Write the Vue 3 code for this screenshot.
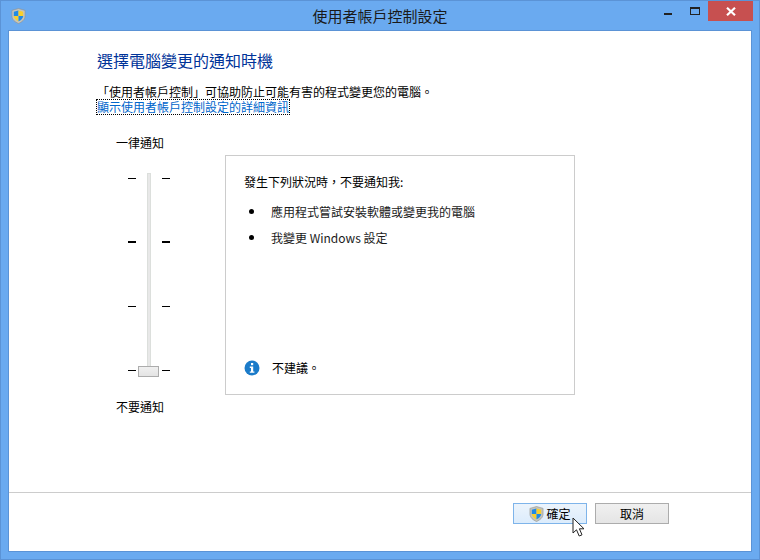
<script setup>
const ticks = [
  { id: 1, bold: false },
  { id: 2, bold: true },
  { id: 3, bold: false },
  { id: 4, bold: false },
]
const bullets = ['應用程式嘗試安裝軟體或變更我的電腦', '我變更 Windows 設定']
</script>

<template>
  <div class="window">
    <div class="titlebar">
      <svg class="title-shield" width="15" height="16" viewBox="0 0 16 17">
        <path d="M8 .5 L15 2.5 V8.5 C15 12.5 11.5 15 8 16.5 C4.5 15 1 12.5 1 8.5 V2.5 Z" fill="#c4c4bd" stroke="#8f8f8a" stroke-width=".6" />
        <path d="M8 2.5 L3 4 V8.5 H8 Z" fill="#1f8ae6" />
        <path d="M8 2.5 L13 4 V8.5 H8 Z" fill="#f8cf2c" />
        <path d="M3 8.5 H8 V14.2 C5.5 13 3.2 11.3 3 8.5 Z" fill="#f8cf2c" />
        <path d="M13 8.5 H8 V14.2 C10.5 13 12.8 11.3 13 8.5 Z" fill="#1f8ae6" />
      </svg>
      <span class="title-text">使用者帳戶控制設定</span>
      <div class="controls">
        <span class="ctl-min"></span>
        <span class="ctl-max"></span>
        <span class="ctl-close">
          <svg width="10" height="9" viewBox="0 0 10 9">
            <path d="M1 .8 L9 8.2 M9 .8 L1 8.2" stroke="#fff" stroke-width="2.2" />
          </svg>
        </span>
      </div>
    </div>

    <div class="client">
      <div class="main">
        <h1 class="heading">選擇電腦變更的通知時機</h1>
        <p class="desc">「使用者帳戶控制」可協助防止可能有害的程式變更您的電腦。</p>
        <a class="link">顯示使用者帳戶控制設定的詳細資訊</a>

        <div class="columns">
          <div class="slider-col">
            <div class="slider-label">一律通知</div>
            <div class="slider">
              <div class="track"></div>
              <div v-for="t in ticks" :key="t.id" class="tick-row" :class="{ bold: t.bold }">
                <span class="tick"></span>
                <span class="tick"></span>
              </div>
              <div class="thumb"></div>
            </div>
            <div class="slider-label">不要通知</div>
          </div>

          <div class="panel">
            <div class="panel-title">發生下列狀況時，不要通知我:</div>
            <ul class="list">
              <li v-for="b in bullets" :key="b">{{ b }}</li>
            </ul>
            <div class="advice">
              <svg width="16" height="16" viewBox="0 0 16 16">
                <circle cx="8" cy="8" r="7.5" fill="#1b7bc9" />
                <rect x="7" y="3" width="2.2" height="2.2" fill="#fff" />
                <path d="M5.8 6.6 H9.2 V11.4 H10.4 V12.8 H5.8 V11.4 H7 V8 H5.8 Z" fill="#fff" />
              </svg>
              <span>不建議。</span>
            </div>
          </div>
        </div>
      </div>

      <div class="footer">
        <button class="btn btn-ok">
          <svg width="15" height="16" viewBox="0 0 16 17">
            <path d="M8 .5 L15 2.5 V8.5 C15 12.5 11.5 15 8 16.5 C4.5 15 1 12.5 1 8.5 V2.5 Z" fill="#c4c4bd" stroke="#8f8f8a" stroke-width=".6" />
            <path d="M8 2.5 L3 4 V8.5 H8 Z" fill="#1f8ae6" />
            <path d="M8 2.5 L13 4 V8.5 H8 Z" fill="#f8cf2c" />
            <path d="M3 8.5 H8 V14.2 C5.5 13 3.2 11.3 3 8.5 Z" fill="#f8cf2c" />
            <path d="M13 8.5 H8 V14.2 C10.5 13 12.8 11.3 13 8.5 Z" fill="#1f8ae6" />
          </svg>
          <span>確定</span>
        </button>
        <button class="btn">取消</button>
        <!-- mouse pointer sits on top of the ok button -->
        <svg class="cursor" width="14" height="21" viewBox="0 0 14 21">
          <path d="M1 1 V16 L4.5 12.8 L7.2 19 L10 17.8 L7.4 11.8 H12 Z" fill="#fff" stroke="#222" stroke-width="1" />
        </svg>
      </div>
    </div>
  </div>
</template>

<style>
html, body {
  margin: 0;
  padding: 0;
  background: #6aaaf0;
}
</style>

<style scoped>
.window {
  width: 760px;
  height: 560px;
  box-sizing: border-box;
  display: flex;
  flex-direction: column;
  background: #6aaaf0;
  border: 1px solid #5b93d6;
  font-family: "Noto Sans CJK TC", "Liberation Sans", sans-serif;
  color: #000;
  font-size: 12px;
}

.titlebar {
  height: 29px;
  flex: none;
  position: relative;
  display: flex;
  align-items: center;
  justify-content: center;
}

.title-shield {
  position: absolute;
  left: 10px;
  top: 7px;
}

.title-text {
  font-size: 15px;
  line-height: 20px;
  color: #1a1a1a;
}

.controls {
  position: absolute;
  right: 6px;
  top: 0;
  display: flex;
  align-items: flex-start;
}

.ctl-min {
  width: 8px;
  height: 2px;
  background: #222;
  margin: 12px 18px 0 0;
}

.ctl-max {
  width: 10px;
  height: 8px;
  box-sizing: border-box;
  border: 1px solid #222;
  border-top-width: 2px;
  margin: 6px 8px 0 0;
}

.ctl-close {
  width: 45px;
  height: 20px;
  background: #c75050;
  display: flex;
  align-items: center;
  justify-content: center;
}

.client {
  margin: 0 7px 7px;
  flex: 1;
  background: #fff;
  border: 1px solid #5b93d6;
  display: flex;
  flex-direction: column;
  min-height: 0;
}

.main {
  flex: 1;
  padding: 19px 0 0 88px;
  min-height: 0;
}

.heading {
  margin: 0;
  font-size: 16px;
  font-weight: 400;
  line-height: 20px;
  color: #003399;
}

.desc {
  margin: 14px 0 0;
  font-size: 12px;
  line-height: 16px;
}

.link {
  display: block;
  width: fit-content;
  font-size: 12px;
  line-height: 14px;
  color: #0066cc;
  outline: 1px dotted #000;
  outline-offset: 0;
}

.columns {
  display: flex;
  margin-top: 21px;
}

.slider-col {
  width: 128px;
  flex: none;
  padding-left: 19px;
  box-sizing: border-box;
}

.slider-label {
  font-size: 12px;
  line-height: 16px;
}

.slider {
  position: relative;
  width: 48px;
  height: 248px;
  padding-top: 27px;
  box-sizing: border-box;
  display: flex;
  flex-direction: column;
  gap: 63px;
}

.track {
  position: absolute;
  left: 31px;
  top: 22px;
  width: 4px;
  height: 204px;
  box-sizing: border-box;
  background: #e8e8e8;
  border: 1px solid #dcdfdc;
}

.tick-row {
  display: flex;
  justify-content: space-between;
  height: 1px;
  padding-left: 12px;
  width: 42px;
}

.tick {
  width: 8px;
  height: 1px;
  background: #000;
}

.tick-row.bold,
.tick-row.bold .tick {
  height: 2px;
}

.tick-row.bold {
  margin-top: -1px;
}

.thumb {
  position: absolute;
  left: 22px;
  top: 215px;
  width: 21px;
  height: 11px;
  box-sizing: border-box;
  background: linear-gradient(#f0f0f0, #e4e4e4);
  border: 1px solid #acacac;
}

.panel {
  margin-top: 20px;
  width: 350px;
  height: 240px;
  box-sizing: border-box;
  border: 1px solid #cccccc;
  padding: 18px 18px 0;
  display: flex;
  flex-direction: column;
}

.panel-title {
  font-size: 12px;
  line-height: 16px;
}

.list {
  list-style: none;
  margin: 14px 0 0;
  padding: 0;
}

.list li {
  position: relative;
  padding-left: 27px;
  line-height: 16px;
  margin-bottom: 10px;
  color: #1a1a1a;
}

.list li::before {
  content: "";
  position: absolute;
  left: 5px;
  top: 5px;
  width: 5px;
  height: 5px;
  border-radius: 50%;
  background: #000;
}

.advice {
  margin-top: auto;
  margin-bottom: 18px;
  display: flex;
  align-items: center;
  gap: 12px;
}

.footer {
  height: 59px;
  flex: none;
  border-top: 1px solid #cccccc;
  box-sizing: border-box;
  display: flex;
  justify-content: flex-end;
  gap: 8px;
  padding: 10px 82px 0 0;
  position: relative;
}

.btn {
  width: 74px;
  height: 21px;
  box-sizing: border-box;
  background: linear-gradient(#f0f0f0, #e5e5e5);
  border: 1px solid #acacac;
  font-family: inherit;
  font-size: 12px;
  color: #000;
  padding: 0;
  display: flex;
  align-items: center;
  justify-content: center;
  gap: 2px;
}

.btn-ok {
  background: linear-gradient(#ecf4fc, #dcecfc);
  border-color: #7eb4ea;
}

.cursor {
  position: absolute;
  left: 563px;
  top: 24px;
}
</style>
